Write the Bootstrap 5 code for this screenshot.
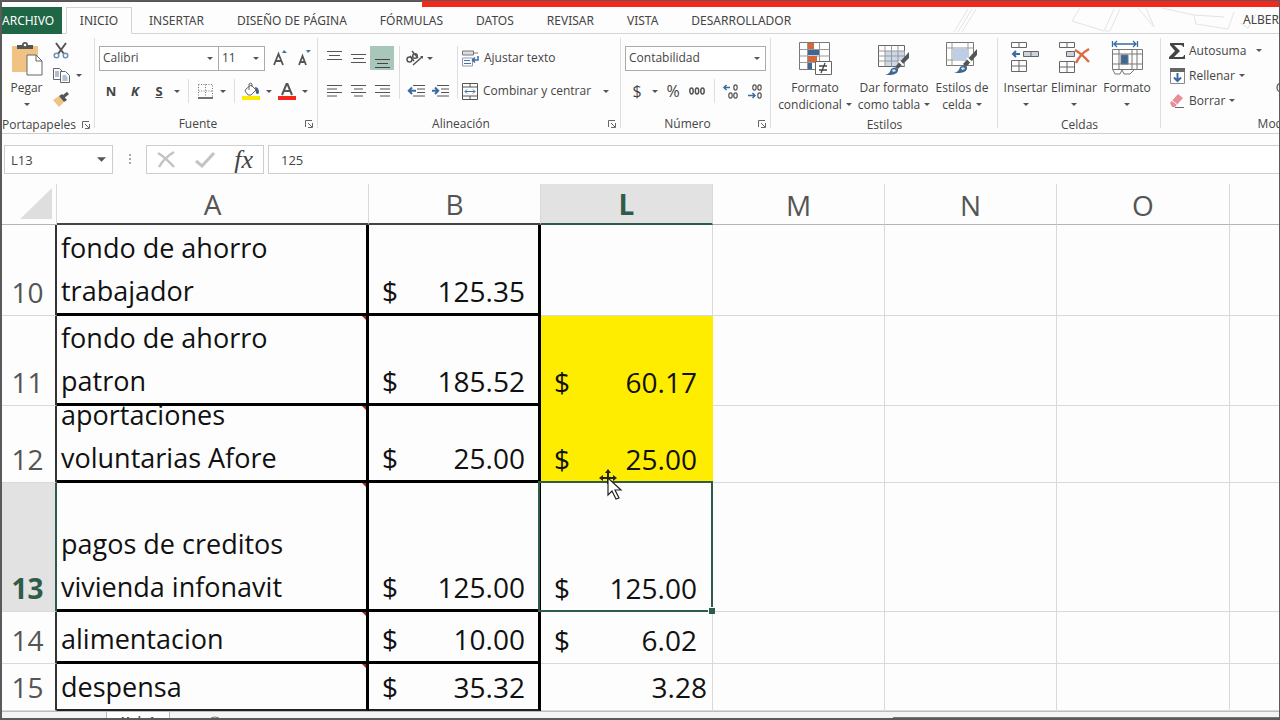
<!DOCTYPE html>
<html lang="es">
<head>
<meta charset="utf-8">
<meta name="viewport" content="width=device-width, initial-scale=1">
<title>Hoja de cálculo</title>
<link href="https://cdn.jsdelivr.net/npm/bootstrap@5.3.0/dist/css/bootstrap.min.css" rel="stylesheet">
<style>
:root{--ink:#444;--line:#d4d4d4;--green:#1e6645;--sel:#2f5b4a}
body{font-family:"Open Sans","Noto Sans",sans-serif;font-size:12px;line-height:16px;color:var(--ink);background:#fdfdfd}
.app{overflow:hidden}
.app::after{content:"";position:absolute;inset:0;border:solid #5a5a5a;border-width:1px 1px 2px 2px;pointer-events:none}
button{padding:0;border:0;background:none;color:inherit}
svg{display:block;flex:none;overflow:visible}
.topband{height:7px;background:linear-gradient(#555 2px,#fdfdfd 2px)}
.topband div{width:67%;background:linear-gradient(#8e1410 1px,#f3281a 1px)}
/* tabs */
.tabs{height:27px;column-gap:1px;border-bottom:1px solid var(--line);font-family:"Noto Sans","Open Sans",sans-serif}
.tabs .nav-link{font-size:12px;line-height:27px;height:27px;padding:0 16px;border:0;border-radius:0;color:var(--ink);white-space:nowrap;margin:0}
.tabs .nav-link.file{background:var(--green);color:#fff;padding:0 0 0 2px;width:62px;margin-right:3px}
.tabs .nav-link.active{border:1px solid var(--line);border-bottom-color:#fdfdfd;background:#fdfdfd;width:66px;padding:0;text-align:center;line-height:25px}
.sketch{right:0;top:7px;z-index:0}
.user{width:37px;line-height:26px;white-space:nowrap}
/* ribbon */
.ribbon{height:100px;padding-top:4px;border-bottom:1px solid #cfcfcf;overflow:hidden;font-weight:500}
.group{flex:none;display:flex;flex-direction:column;height:95px;position:relative}
.group::after{content:"";position:absolute;right:0;top:0;height:90px;border-right:1px solid #dedede}
.gbody{height:78px;padding:8px 0 0 4px}
.glabel{display:flex;height:18px;line-height:18px;font-weight:400}
.glabel span{flex:1;text-align:center}
.launch{width:17px;display:flex;align-items:center;padding-left:4px}
.g-clip{width:95px}.g-font{width:223px}.g-align{width:303px}.g-num{width:150px}.g-style{width:227px}.g-cells{width:163px}.g-edit{width:230px}
.rowc{display:flex;height:24px;align-items:center}
.rows{display:flex;flex-direction:column;gap:9px}
.tile{width:24px;height:24px;display:flex;align-items:center;justify-content:center;flex:none;font-size:13px}
.tile.narrow{width:20px}
.tile.on{background:#a9c6bb}
.drop{width:12px;height:24px;display:flex;align-items:center;justify-content:center;flex:none}
.drop::before,.tri::after{content:"";border:solid transparent;border-width:3px 3px 0;border-top-color:#555}
.tri::after{display:inline-block;vertical-align:3px;margin-left:4px}
.vsep{width:10px;flex:none;align-self:stretch;background:linear-gradient(#dedede,#dedede) 5px 0/1px 100% no-repeat}
.combo{appearance:none;height:25px;border:1px solid #ababab;border-radius:0;padding:0 14px 0 3px;font-size:12px;line-height:22px;color:var(--ink);background:#fff url("data:image/svg+xml,%3Csvg xmlns='http://www.w3.org/2000/svg' viewBox='0 0 6 3'%3E%3Cpath d='M0 0h6L3 3z' fill='%23555'/%3E%3C/svg%3E") right 5px center/6px 3px no-repeat}
.c-font{width:120px}.c-size{width:46px;border-left-width:0}.c-num{width:141px}
.cmd{display:flex;align-items:center;gap:5px;height:24px;white-space:nowrap}
.big{display:flex;flex-direction:column;align-items:center;line-height:17px;height:74px;white-space:nowrap}
.big svg{margin-bottom:4px}
.big .low::after{margin-left:0}
.tight{padding-top:4px}
.w-cond{width:80px}.w-tab{width:78px}.w-sty{width:58px}.w-ins{width:47px}.w-del{width:50px}.w-fmt{width:56px}.w-paste{width:45px}.w-ord{width:60px}
.stack3{display:flex;flex-direction:column}
.stack3 .cmd{gap:3px;height:25px}
.stack3 .tile{height:24px}
.g-clip .stack3{margin-top:-3px}
/* formula bar */
.fbar{height:50px;padding:11px 0 0 4px}
.box{height:29px;border:1px solid #cdcdcd;background-color:#fff;border-radius:0;font-size:13px;color:var(--ink)}
.namebox{width:109px;padding:0 6px;background-position:right 6px center;background-size:9px 5px}
.entry{min-width:0;padding:0 12px}
.dots{width:33px}
.fxbox{width:118px}
.fxbox button{width:39px}
.fxbox em{font:italic 26px/24px "Liberation Serif",serif}
/* grid */
.sheet{table-layout:fixed;width:100%;border-collapse:separate;border-spacing:0;font-size:28px;line-height:43px;color:#111}
.c0{width:57px}.cA{width:312px}.cB,.cX{width:172px}.cO{width:173px}
.sheet th,.sheet td{padding:0;font-weight:400;border:solid #d9d9d9;border-width:0 1px 1px 0;vertical-align:bottom}
.sheet thead th{height:41px;text-align:center;color:#555;border-bottom-color:#b5b5b5;line-height:38px;vertical-align:bottom}
.sheet thead th.dk{border-bottom:2px solid #444}
.sheet thead th.cur{background:#e2e2e2;color:var(--sel);font-weight:700;border-bottom:2px solid var(--sel)}
.sheet tbody th{text-align:center;color:#555;border-right:2px solid #333;padding:0 0 1px}
.sheet tbody th.cur{background:#e2e2e2;color:var(--sel);font-weight:700;border-right-color:var(--sel)}
.sheet td.bk{border:solid #000;border-width:0 3px 3px 0;position:relative}
.sheet tr:last-child td.bk{border-bottom:2px solid #222}
.note::after{content:"";position:absolute;right:0;top:0;border:solid transparent;border-width:0 4px 4px 0;border-right-color:#b3202a}
.txt{padding:0 0 1px 4px;font-size:27px;font-weight:500;display:flex;flex-direction:column;justify-content:flex-end;overflow:hidden;height:var(--inner)}
.money,.num{font-weight:500}
.h10{height:91px}.h11{height:90px}.h12{height:77px;--inner:74px}.h13{height:129px}.h14{height:52px}.h15{height:47px}
.money{display:flex;justify-content:space-between;padding:0 13px}
.sheet td.plain .money{padding:0 15px 1px 13px}
.sheet td.plain .num{padding:0 5px 1px 0;text-align:right}
.sheet td.fill{background:#ffed00;border-color:#ffed00}
.selbox{position:absolute;inset:-2px -1px -1px -3px;border:2px solid var(--sel)}
.selbox::after{content:"";position:absolute;right:-4px;bottom:-4px;width:7px;height:7px;background:var(--sel);border:solid #fdfdfd;border-width:1px 0 0 1px}
.pointer{position:absolute;left:58px;top:-14px}
/* sheet tabs */
.sbar{height:9px;background:#f4f4f4;border-top:1px solid #bdbdbd;overflow:hidden;padding-left:106px}
.sbar a{width:64px;height:16px;background:#fff;border:solid #bbb;border-width:0 1px;text-align:center;font-weight:700;color:#444;text-decoration:none;line-height:19px}
.thumb{width:33%;height:8px;border-top:2px solid #777;margin-top:5px}
</style>
</head>
<body>
<main class="app position-relative min-vh-100 d-flex flex-column">
<div class="topband d-flex justify-content-end"><div></div></div>
<svg class="sketch position-absolute" width="330" height="26" fill="none" stroke="#e4e4e4"><path d="M4 25 18 2M8 25 22 2M12 25 26 2M122 14l8-13M122 14l32 10L164 2M155 24h5l10-22M188 1l16 19M196 1l8 19M212 1l32 7 30 2M244 8l2 9 32 5 6-17M290 16l8 5 8-14"/></svg>
<nav class="tabs nav flex-nowrap position-relative" aria-label="Cinta">
<a class="nav-link file" href="#">ARCHIVO</a><a class="nav-link active" href="#">INICIO</a><a class="nav-link" href="#">INSERTAR</a><a class="nav-link" href="#">DISEÑO DE PÁGINA</a><a class="nav-link" href="#">FÓRMULAS</a><a class="nav-link" href="#">DATOS</a><a class="nav-link" href="#">REVISAR</a><a class="nav-link" href="#">VISTA</a><a class="nav-link" href="#">DESARROLLADOR</a>
<span class="user ms-auto">ALBERTO</span>
</nav>

<div class="ribbon d-flex">
 <section class="group g-clip">
  <div class="gbody tight d-flex">
   <button class="big w-paste"><svg width="32" height="33"><path d="M1 4h26v26H1z" fill="#f0c283"/><path d="M6 7V3h5a3 3 0 0 1 6 0h5v4z" fill="#555"/><circle cx="14" cy="3" r="1.300" fill="#fff"/><path d="M16 13h9l6 6v14H16z" fill="#fff" stroke="#666"/><path d="M25 13v6h6" fill="none" stroke="#666"/></svg><span>Pegar</span><span class="tri low"></span></button>
   <div class="stack3">
    <button class="tile" aria-label="Cortar"><svg width="16" height="16" fill="none" stroke-width="2"><path d="M3 0l8 11M13 0 5 11" stroke="#555"/><circle cx="3.500" cy="12.500" r="2.300" stroke="#6d8fba" stroke-width="1.500"/><circle cx="12.500" cy="12.500" r="2.300" stroke="#6d8fba" stroke-width="1.500"/></svg></button>
    <div class="d-flex"><button class="tile" aria-label="Copiar"><svg width="17" height="15" fill="#fff" stroke="#666"><path d="M.5.500h6l3 3v8h-9z"/><path d="M7.500 3.500h5l4 4v7h-9z"/><path d="M2 4h4M2 6h4M2 8h4M9.500 8h4M9.500 10h5M9.500 12h5" stroke="#5e7fa9"/></svg></button><button class="drop" aria-label="Más opciones de copia"></button></div>
    <button class="tile" aria-label="Copiar formato"><svg width="17" height="15"><path d="M0 8 6 4l5 6-5 5z" fill="#f0c283"/><path d="M6 4l3-2 5 6-3 2z" fill="#555"/><path d="M10 5l5-4" stroke="#555" stroke-width="3"/></svg></button>
   </div>
  </div>
  <div class="glabel"><span>Portapapeles</span><button class="launch" aria-label="Abrir Portapapeles"><svg width="8" height="8" fill="none" stroke="#666"><path d="M.5 7V.500H7M3 3l4 4M7.500 3v4.500H3"/></svg></button></div>
 </section>

 <section class="group g-font">
  <div class="gbody rows">
   <div class="rowc"><select class="combo c-font" aria-label="Fuente"><option>Calibri</option></select><select class="combo c-size" aria-label="Tamaño"><option>11</option></select>
    <button class="tile ms-1" aria-label="Aumentar fuente"><svg width="16" height="16" fill="none"><path d="M1 15 5.500 4 10 15M3 11h5" stroke="#555" stroke-width="1.800"/><path d="M9 3l2-3 3 3z" fill="#4472a8"/></svg></button><button class="tile" aria-label="Reducir fuente"><svg width="16" height="16" fill="none"><path d="M2 15 5.500 6 9 15M3 12h5" stroke="#555" stroke-width="1.800"/><path d="M9 0l2 3 3-3z" fill="#4472a8"/></svg></button></div>
   <div class="rowc"><button class="tile fw-bold">N</button><button class="tile fw-bold fst-italic">K</button><button class="tile fw-bold text-decoration-underline">S</button><button class="drop" aria-label="Más subrayado"></button><i class="vsep"></i>
    <button class="tile" aria-label="Bordes"><svg width="15" height="15" fill="none" stroke="#777"><path d="M.5.500h14v13M.5.500v13M7.500.500v13M.5 7h14" stroke-dasharray="1 1.500"/><path d="M0 14h15" stroke="#444" stroke-width="1.500"/></svg></button><button class="drop" aria-label="Más bordes"></button><i class="vsep"></i>
    <button class="tile" aria-label="Color de relleno"><svg width="18" height="17"><path d="M4 6l5-4 5 5-5 5H6L3 8z" fill="#fff" stroke="#666"/><path d="M7 7V1q2-2 3 0v3" fill="none" stroke="#666"/><path d="M13 4q4 0 4 6-2 2-3 0z" fill="#3f5f8d"/><path d="M0 13h18v4H0z" fill="#ffe900"/></svg></button><button class="drop" aria-label="Más colores de relleno"></button>
    <button class="tile" aria-label="Color de fuente"><svg width="18" height="17"><path d="M4 12 8.500 1h1L14 12M6 8h6" fill="none" stroke="#555" stroke-width="2"/><path d="M0 13h18v4H0z" fill="#f3281a"/></svg></button><button class="drop" aria-label="Más colores de fuente"></button></div>
  </div>
  <div class="glabel"><span>Fuente</span><button class="launch" aria-label="Abrir Fuente"><svg width="8" height="8" fill="none" stroke="#666"><path d="M.5 7V.500H7M3 3l4 4M7.500 3v4.500H3"/></svg></button></div>
 </section>

 <section class="group g-align">
  <div class="gbody d-flex">
   <div class="rows">
    <div class="rowc"><button class="tile" aria-label="Alinear arriba"><svg width="15" height="15" stroke="#555"><path d="M0 .5h15M2 4.500h11M0 8.500h15"/></svg></button><button class="tile" aria-label="Alinear al medio"><svg width="15" height="15" stroke="#555"><path d="M0 3.500h15M2 7.500h11M0 11.500h15"/></svg></button><button class="tile on" aria-label="Alinear abajo"><svg width="15" height="15" stroke="#444"><path d="M0 8.500h15M2 12.500h11M0 16.500h15"/></svg></button></div>
    <div class="rowc"><button class="tile" aria-label="Alinear a la izquierda"><svg width="15" height="12" stroke="#555"><path d="M0 .5h15M0 4h10M0 7.500h15M0 11h10"/></svg></button><button class="tile" aria-label="Centrar"><svg width="15" height="12" stroke="#555"><path d="M0 .5h15M3 4h9M0 7.500h15M3 11h9"/></svg></button><button class="tile" aria-label="Alinear a la derecha"><svg width="15" height="12" stroke="#555"><path d="M0 .5h15M5 4h10M0 7.500h15M5 11h10"/></svg></button></div>
   </div>
   <i class="vsep mb-3"></i>
   <div class="rows">
    <div class="rowc"><button class="tile narrow" aria-label="Orientación"><svg width="17" height="15" fill="none" stroke="#555" stroke-width="1.500"><circle cx="3.500" cy="8.500" r="2.500"/><path d="M4 5l4 5M6 0l6 7"/><circle cx="9" cy="5" r="2.300"/><path d="M7 14 16 6"/><path d="M14 5h3v3z" fill="#555" stroke="none"/></svg></button><button class="drop" aria-label="Más orientación"></button></div>
    <div class="rowc"><button class="tile" aria-label="Disminuir sangría"><svg width="17" height="12" stroke="#555" fill="none"><path d="M5 .5h12M9 4h8M9 7.500h8M5 11h12"/><path d="M1 5.700h7M4 2.500.800 5.700 4 9" stroke="#3b6aa0" stroke-width="2"/></svg></button><button class="tile" aria-label="Aumentar sangría"><svg width="17" height="12" stroke="#555" fill="none"><path d="M5 .5h12M9 4h8M9 7.500h8M5 11h12"/><path d="M0 5.700h6M3 2.500 6.200 5.700 3 9" stroke="#3b6aa0" stroke-width="2"/></svg></button></div>
   </div>
   <i class="vsep mb-3"></i>
   <div class="rows">
    <button class="cmd"><svg width="17" height="17" fill="none"><path d="M.5 1h11v4H.500z" fill="#ddd" stroke="#777"/><path d="M11 3h5" stroke="#777"/><path d="M.5 8h10v8H.500z" stroke="#8a9db8"/><path d="M2 10.500h6M2 13.500h7" stroke="#4472a8"/><path d="M16 6v4h-5M13 7.500 10.500 10l2.500 2.500" stroke="#3b6aa0" stroke-width="1.500"/></svg><span>Ajustar texto</span></button>
    <button class="cmd"><svg width="16" height="17" fill="none" stroke="#555"><path d="M.5.500h15v16H.500zM.5 4h15M.5 13h15M8 .5V4M8 13v3.500"/><path d="M3 8.500h10M5 6.500l-2 2 2 2M11 6.500l2 2-2 2" stroke="#4472a8"/></svg><span>Combinar y centrar</span><i class="drop ms-1"></i></button>
   </div>
  </div>
  <div class="glabel"><span>Alineación</span><button class="launch" aria-label="Abrir Alineación"><svg width="8" height="8" fill="none" stroke="#666"><path d="M.5 7V.500H7M3 3l4 4M7.500 3v4.500H3"/></svg></button></div>
 </section>

 <section class="group g-num">
  <div class="gbody rows">
   <div class="rowc"><select class="combo c-num" aria-label="Formato de número"><option>Contabilidad</option></select></div>
   <div class="rowc"><button class="tile fs-6">$</button><button class="drop" aria-label="Más monedas"></button><button class="tile fs-6">%</button><button class="tile" aria-label="Estilo millares"><svg width="16" height="8" fill="none" stroke="#555" stroke-width="1.500"><ellipse cx="2.500" cy="4" rx="1.700" ry="3"/><ellipse cx="8" cy="4" rx="1.700" ry="3"/><ellipse cx="13.500" cy="4" rx="1.700" ry="3"/></svg></button><i class="vsep"></i>
   <button class="tile" aria-label="Aumentar decimales"><svg width="16" height="15" fill="none" stroke="#555" stroke-width="1.200"><ellipse cx="12.500" cy="3.500" rx="1.700" ry="2.700"/><ellipse cx="7.500" cy="11.500" rx="1.700" ry="2.700"/><ellipse cx="12.500" cy="11.500" rx="1.700" ry="2.700"/><path d="M1 3.500h6M3.500 1 1 3.500 3.500 6" stroke="#3b6aa0" stroke-width="1.500"/></svg></button>
   <button class="tile" aria-label="Disminuir decimales"><svg width="16" height="15" fill="none" stroke="#555" stroke-width="1.200"><ellipse cx="7.500" cy="3.500" rx="1.700" ry="2.700"/><ellipse cx="12.500" cy="3.500" rx="1.700" ry="2.700"/><ellipse cx="12.500" cy="11.500" rx="1.700" ry="2.700"/><path d="M1 11.500h7M5.500 9 8 11.500 5.500 14" stroke="#3b6aa0" stroke-width="1.500"/></svg></button></div>
  </div>
  <div class="glabel"><span>Número</span><button class="launch" aria-label="Abrir Número"><svg width="8" height="8" fill="none" stroke="#666"><path d="M.5 7V.500H7M3 3l4 4M7.500 3v4.500H3"/></svg></button></div>
 </section>

 <section class="group g-style">
  <div class="gbody tight d-flex">
   <button class="big w-cond"><svg width="32" height="33" fill="none"><path d="M.5.500h30v27H.500z" fill="#fff" stroke="#777"/><path d="M.5 7.500h30M.5 14h30M.5 20.500h30M8.500.500v27M20.500.500v27" stroke="#999"/><path d="M9 1h6v6H9zM9 14h9v6H9z" fill="#d9653b"/><path d="M9 8h11v5H9zM9 21h4v6H9z" fill="#3c6797"/><path d="M16.500 19.500h16v13h-16z" fill="#fff" stroke="#666"/><path d="M20 24h8M20 28h8M26 21l-4 10" stroke="#444" stroke-width="1.300"/></svg><span>Formato</span><span class="tri">condicional</span></button>
   <button class="big w-tab"><svg width="32" height="33" fill="none"><path d="M.5 3.500h26v21H.500z" fill="#fff" stroke="#666"/><path d="M7 9h19.500v15H7z" fill="#cdd8ea"/><path d="M.5 9h26M.5 14h26M.5 19h26M7 3.500v21M13.500 3.500v21M20 3.500v21" stroke="#999"/><path d="M17 25 31 10v6L20 27z" fill="#555"/><path d="M21 19l4 4" stroke="#fff" stroke-width="2"/><path d="M7 33q5-1 6-6 4-3 7 0 1 5-7 6z" fill="#3c6797"/><path d="M14 28q3-2 4 1l-3 1z" fill="#dfe9f5"/></svg><span>Dar formato</span><span class="tri">como tabla</span></button>
   <button class="big w-sty"><svg width="32" height="33" fill="none"><path d="M.5.500h27v23H.500z" fill="#fff" stroke="#777"/><path d="M.5 6h27M.5 18h27M6 .5v23M22 .5v23" stroke="#999"/><path d="M7 7h15v11H7z" fill="#bccde6"/><path d="M17 22 31 7v6L20 25z" fill="#555"/><path d="M21 16l4 4" stroke="#fff" stroke-width="2"/><path d="M8 31q5-1 6-6 4-3 7 0 1 5-7 6z" fill="#3c6797"/><path d="M15 26q3-2 4 1l-3 1z" fill="#dfe9f5"/></svg><span>Estilos de</span><span class="tri">celda</span></button>
  </div>
  <div class="glabel"><span>Estilos</span></div>
 </section>

 <section class="group g-cells">
  <div class="gbody tight d-flex">
   <button class="big w-ins"><svg width="29" height="33" fill="none" stroke="#666"><path d="M.5.500h15v5H.500zM8 .5v5M.5 18.500h15v11H.500zM.5 24h15M8 18.500v11"/><path d="M12.500 9.500h15v5h-15zM20 9.500v5" fill="#ccd3dd"/><path d="M2 12h7M5 9l-3 3 3 3" stroke="#3b6aa0" stroke-width="2"/></svg><span>Insertar</span><span class="tri low"></span></button>
   <button class="big w-del"><svg width="31" height="33" fill="none" stroke="#666"><path d="M.5.500h15v5H.500zM8 .5v5M.5 19.500h15v11H.500zM.5 25h15M8 19.500v11"/><path d="M7.500 9.500h8v5h-8z" fill="#ccd3dd"/><path d="M16 8q7 4 14 12M30 7Q21 12 17 21" stroke="#dd6a45" stroke-width="2.500"/></svg><span>Eliminar</span><span class="tri low"></span></button>
   <button class="big w-fmt"><svg width="31" height="33" fill="none" stroke="#777"><path d="M.5 7.500h30v20H.500zM.5 12h30M.5 22h30M7 7.500v20M20 7.500v20M25 7.500v20M1 28l2 4h5l2-4 2 4h6l4-4"/><path d="M9 13h7v9H9z" fill="#3c6797"/><path d="M2 2h22M5-1 2 2l3 3M21-1l3 3-3 3M.5-1v6M25.500-1v6" stroke="#3b6aa0" stroke-width="1.300"/></svg><span>Formato</span><span class="tri low"></span></button>
  </div>
  <div class="glabel"><span>Celdas</span></div>
 </section>

 <section class="group g-edit">
  <div class="gbody tight d-flex ps-2 pt-0">
   <div class="stack3">
    <button class="cmd"><svg width="17" height="16"><path d="M1 0h14v4h-1q0-2-3-2H5l6 6-6 6h7q3 0 3-2h1v4H0v-2l6-6L1 2z" fill="#444"/></svg><span>Autosuma</span><i class="drop ms-1"></i></button>
    <button class="cmd"><svg width="17" height="16" fill="none"><path d="M1.500 1.500h14v14h-14z" fill="#fff" stroke="#888"/><path d="M1 0h15v4H1z" fill="#666"/><path d="M8.500 5v8M5 9.500 8.500 13 12 9.500" stroke="#3b6aa0" stroke-width="2"/></svg><span class="tri">Rellenar</span></button>
    <button class="cmd"><svg width="17" height="14"><path d="M1 9 9 0l5 4-8 9H3z" fill="#e98d98"/><path d="M3 6.500l5 4" stroke="#fff"/><path d="M6 13.500h9" stroke="#666"/></svg><span class="tri">Borrar</span></button>
   </div>
   <button class="big ms-1 w-ord"><svg width="31" height="37"></svg><span>Ordenar</span></button>
  </div>
  <div class="glabel ps-3"><span>Modificar</span></div>
 </section>
</div>

<div class="fbar d-flex">
 <select class="combo box namebox" aria-label="Cuadro de nombres"><option>L13</option></select>
 <svg class="dots" height="28" fill="#aaa"><path d="M16 9h2v2h-2zM16 13h2v2h-2zM16 17h2v2h-2z"/></svg>
 <div class="box fxbox d-flex align-items-center">
  <button class="d-flex justify-content-center" aria-label="Cancelar"><svg width="18" height="16" fill="none" stroke="#c3c3c3" stroke-width="2.500"><path d="M1 1q8 5 16 14M17 0Q7 6 2 15"/></svg></button><button class="d-flex justify-content-center" aria-label="Introducir"><svg width="20" height="16" fill="none" stroke="#c3c3c3" stroke-width="3"><path d="M1 9l6 5L19 1"/></svg></button><button aria-label="Insertar función"><em>fx</em></button>
 </div>
 <input class="box entry flex-grow-1 ms-1 border-end-0" aria-label="Barra de fórmulas" value="125">
</div>

<table class="sheet">
<colgroup><col class="c0"><col class="cA"><col class="cB"><col class="cX"><col class="cX"><col class="cX"><col class="cO"><col></colgroup>
<thead><tr><th><svg class="ms-auto me-1 mb-1" width="32" height="32"><path d="M32 0v31H0z" fill="#dedede"/></svg></th><th class="dk" scope="col">A</th><th class="dk" scope="col">B</th><th class="cur" scope="col">L</th><th scope="col">M</th><th scope="col">N</th><th scope="col">O</th><th></th></tr></thead>
<tbody>
<tr class="h10"><th scope="row">10</th><td class="bk"><div class="txt"><span>fondo de ahorro</span><span>trabajador</span></div></td><td class="bk"><div class="money"><span>$</span><span>125.35</span></div></td><td></td><td></td><td></td><td></td><td></td></tr>
<tr class="h11"><th scope="row">11</th><td class="bk note"><div class="txt"><span>fondo de ahorro</span><span>patron</span></div></td><td class="bk"><div class="money"><span>$</span><span>185.52</span></div></td><td class="plain fill"><div class="money"><span>$</span><span>60.17</span></div></td><td></td><td></td><td></td><td></td></tr>
<tr class="h12"><th scope="row">12</th><td class="bk note"><div class="txt"><span>aportaciones</span><span>voluntarias Afore</span></div></td><td class="bk"><div class="money"><span>$</span><span>25.00</span></div></td><td class="plain fill"><div class="money"><span>$</span><span>25.00</span></div></td><td></td><td></td><td></td><td></td></tr>
<tr class="h13"><th class="cur" scope="row">13</th><td class="bk note"><div class="txt"><span>pagos de creditos</span><span>vivienda infonavit</span></div></td><td class="bk"><div class="money"><span>$</span><span>125.00</span></div></td><td class="plain position-relative"><div class="money"><span>$</span><span>125.00</span></div><div class="selbox"></div>
<svg class="pointer" width="22" height="32"><path d="M9 0l3 4h-2v4h4V6l4 3-4 3v-2h-4v5H8v-5H4v2L0 9l4-3v2h4V4H6z" fill="#222"/><path d="M9 9v17l4-4 4 8 3-1-4-8h6z" fill="#fff" stroke="#222" stroke-width="1.200"/></svg></td><td></td><td></td><td></td><td></td></tr>
<tr class="h14"><th scope="row">14</th><td class="bk note"><div class="txt"><span>alimentacion</span></div></td><td class="bk"><div class="money"><span>$</span><span>10.00</span></div></td><td class="plain"><div class="money"><span>$</span><span>6.02</span></div></td><td></td><td></td><td></td><td></td></tr>
<tr class="h15"><th scope="row">15</th><td class="bk note"><div class="txt"><span>despensa</span></div></td><td class="bk"><div class="money"><span>$</span><span>35.32</span></div></td><td class="plain"><div class="num">3.28</div></td><td></td><td></td><td></td><td></td></tr>
</tbody>
</table>
<div class="sbar d-flex"><a href="#">Hoja1</a><svg class="ms-4 ps-2" width="32" height="20" fill="none" stroke="#777"><circle cx="13" cy="13" r="8"/></svg><div class="thumb ms-auto"></div></div>
</main>
<script src="https://cdn.jsdelivr.net/npm/bootstrap@5.3.0/dist/js/bootstrap.bundle.min.js"></script>
</body>
</html>
